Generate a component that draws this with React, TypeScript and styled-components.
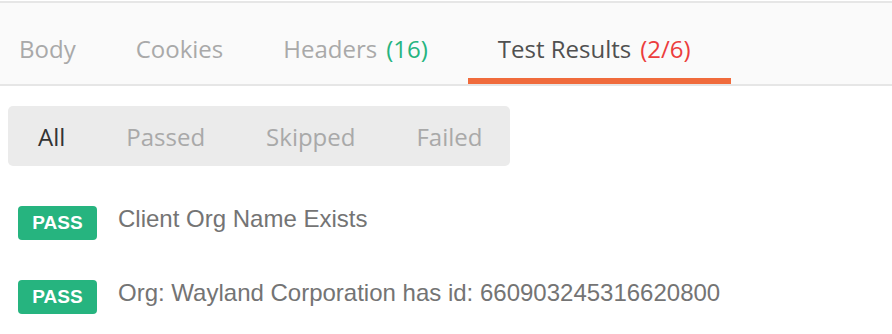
import React, { useState } from "react";
import styled, { createGlobalStyle } from "styled-components";

const GlobalStyle = createGlobalStyle`
  html, body {
    margin: 0;
    padding: 0;
    background: #ffffff;
  }
`;

const Page = styled.div`
  width: 892px;
  height: 334px;
  overflow: hidden;
  padding-top: 1px;
  box-sizing: border-box;
`;

const TabBar = styled.nav`
  display: flex;
  align-items: stretch;
  height: 81px;
  background: #fafafa;
  border-top: 2px solid #e6e6e6;
  border-bottom: 2px solid #e6e6e6;
`;

const Tab = styled.div<{ $active?: boolean }>`
  display: flex;
  align-items: center;
  gap: 9px;
  padding: 16px 30px 0;
  font-family: "Open Sans", "Noto Sans", sans-serif;
  font-size: 24px;
  color: ${({ $active }) => ($active ? "#505050" : "#a9a9a9")};
  border-bottom: 6px solid ${({ $active }) => ($active ? "#f06b3c" : "transparent")};
  cursor: pointer;
  &:first-child {
    padding-left: 19px;
  }
`;

const ActiveTab = styled(Tab)`
  margin-left: 10px;
  padding-right: 40px;
`;

const Count = styled.span<{ $tone: "ok" | "bad" }>`
  color: ${({ $tone }) => ($tone === "ok" ? "#26b47f" : "#ec3d3d")};
`;

const FilterWrap = styled.div`
  padding: 20px 0 0 8px;
`;

const Filters = styled.div`
  display: inline-flex;
  align-items: center;
  width: 502px;
  height: 60px;
  box-sizing: border-box;
  background: #ebebeb;
  border-radius: 5px;
  padding-left: 30px;
  gap: 61px;
`;

const Filter = styled.span<{ $active?: boolean }>`
  font-family: "Open Sans", "Noto Sans", sans-serif;
  font-size: 24px;
  color: ${({ $active }) => ($active ? "#333333" : "#a9a9a9")};
  cursor: pointer;
`;

const Results = styled.ul`
  list-style: none;
  margin: 0;
  padding: 40px 0 0 18px;
  display: flex;
  flex-direction: column;
  gap: 40px;
`;

const Row = styled.li`
  display: flex;
  align-items: center;
  gap: 21px;
  height: 34px;
`;

const Badge = styled.span`
  display: inline-flex;
  align-items: center;
  justify-content: center;
  width: 79px;
  height: 34px;
  border-radius: 4px;
  background: #26b47f;
  color: #ffffff;
  font-family: "Liberation Sans", Arial, sans-serif;
  font-weight: 700;
  font-size: 19px;
`;

const Name = styled.span`
  font-family: "Liberation Sans", Arial, sans-serif;
  font-size: 24px;
  color: #747474;
  margin-top: -8px;
`;

const tests = [
  { status: "PASS", name: "Client Org Name Exists" },
  { status: "PASS", name: "Org: Wayland Corporation has id: 660903245316620800" },
];

export default function App() {
  const [filter, setFilter] = useState("All");
  return (
    <Page>
      <GlobalStyle />
      <TabBar>
        <Tab>Body</Tab>
        <Tab>Cookies</Tab>
        <Tab>
          Headers <Count $tone="ok">(16)</Count>
        </Tab>
        <ActiveTab $active>
          Test Results <Count $tone="bad">(2/6)</Count>
        </ActiveTab>
      </TabBar>
      <FilterWrap>
        <Filters>
          {["All", "Passed", "Skipped", "Failed"].map((f) => (
            <Filter key={f} $active={f === filter} onClick={() => setFilter(f)}>
              {f}
            </Filter>
          ))}
        </Filters>
      </FilterWrap>
      <Results>
        {tests.map((t) => (
          <Row key={t.name}>
            <Badge>{t.status}</Badge>
            <Name>{t.name}</Name>
          </Row>
        ))}
      </Results>
    </Page>
  );
}
